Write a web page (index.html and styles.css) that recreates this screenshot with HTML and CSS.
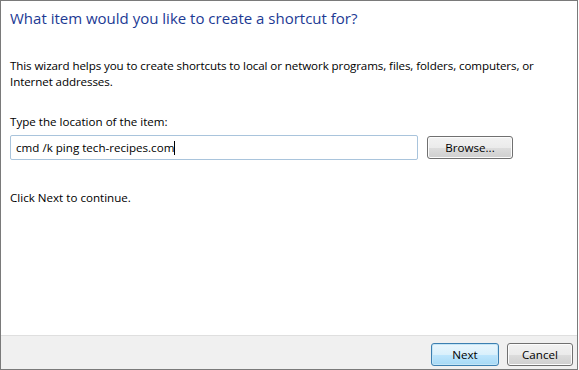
FILE: index.html
```html
<!DOCTYPE html>
<html>
    <head>
        <meta charset="UTF-8">
        <title>Create Shortcut</title>
        <link rel="stylesheet" href="styles.css">
    </head>
    <body>
        <div class="wizard">
            <div class="content">
                <h1 class="title">What item would you like to create a shortcut for?</h1>
                <p class="intro">This wizard helps you to create shortcuts to local or network programs, files, folders, computers, or Internet addresses.</p>
                <label class="field-label">Type the location of the item:</label>
                <div class="location">
                    <div class="textbox">cmd /k ping tech-recipes.com<span class="caret"></span></div>
                    <button class="btn browse">Browse...</button>
                </div>
                <p class="hint">Click Next to continue.</p>
            </div>
            <!--buttons-->
            <div class="footer">
                <button class="btn default">Next</button>
                <button class="btn">Cancel</button>
            </div>
        </div>
    </body>
</html>
```

FILE: styles.css
```css
body{
    margin: 0;
    font-family: 'Open Sans', 'Noto Sans', sans-serif;
    font-size: 11.6px;
    color: #000;
}
.wizard{
    box-sizing: border-box;
    width: 578px;
    height: 370px;
    border: 1px solid #7a7a7a;
    display: flex;
    flex-direction: column;
    background-color: #fff;
}
.content{
    flex: 1;
    padding: 0 9px;
}
.title{
    margin: 7px 0 0 0;
    font-size: 15px;
    font-weight: normal;
    color: #1c3a94;
    line-height: 20px;
}
.intro{
    margin: 30px 0 0 0;
    line-height: 16px;
    width: 536px;
    letter-spacing: -0.1px;
}
.field-label{
    display: block;
    margin-top: 24px;
    line-height: 16px;
}
.location{
    display: flex;
    align-items: center;
    margin-top: 5px;
}
.textbox{
    box-sizing: border-box;
    width: 408px;
    height: 25px;
    border: 1px solid #a9c4dc;
    border-radius: 2px;
    padding: 0 5px;
    line-height: 23px;
}
.caret{
    display: inline-block;
    width: 1px;
    height: 14px;
    background-color: #000;
    vertical-align: -3px;
}
.btn{
    box-sizing: border-box;
    height: 23px;
    border: 1px solid #707070;
    border-radius: 3px;
    background: linear-gradient(#f2f2f2 0%, #ebebeb 50%, #dddddd 51%, #cfcfcf 100%);
    font-family: 'Open Sans', 'Noto Sans', sans-serif;
    font-size: 11.6px;
    color: #000;
    padding: 0;
    width: 66px;
    box-shadow: inset 0 0 0 1px #fcfcfc;
}
.browse{
    margin-left: 9px;
    width: 86px;
}
.hint{
    margin: 30px 0 0 0;
    line-height: 16px;
}
.footer{
    border-top: 1px solid #dfdfdf;
    background-color: #f0f0f0;
    height: 33px;
    display: flex;
    justify-content: flex-end;
    align-items: center;
    gap: 8px;
    padding-right: 4px;
}
.footer .btn{
    margin-top: 4px;
}
.default{
    width: 68px;
    border-color: #3c7fb1;
    background: linear-gradient(#eaf6fd 0%, #d9f0fc 50%, #bee6fd 51%, #a7d9f5 100%);
    box-shadow: inset 0 0 0 1px #c4e5f6;
}
```
